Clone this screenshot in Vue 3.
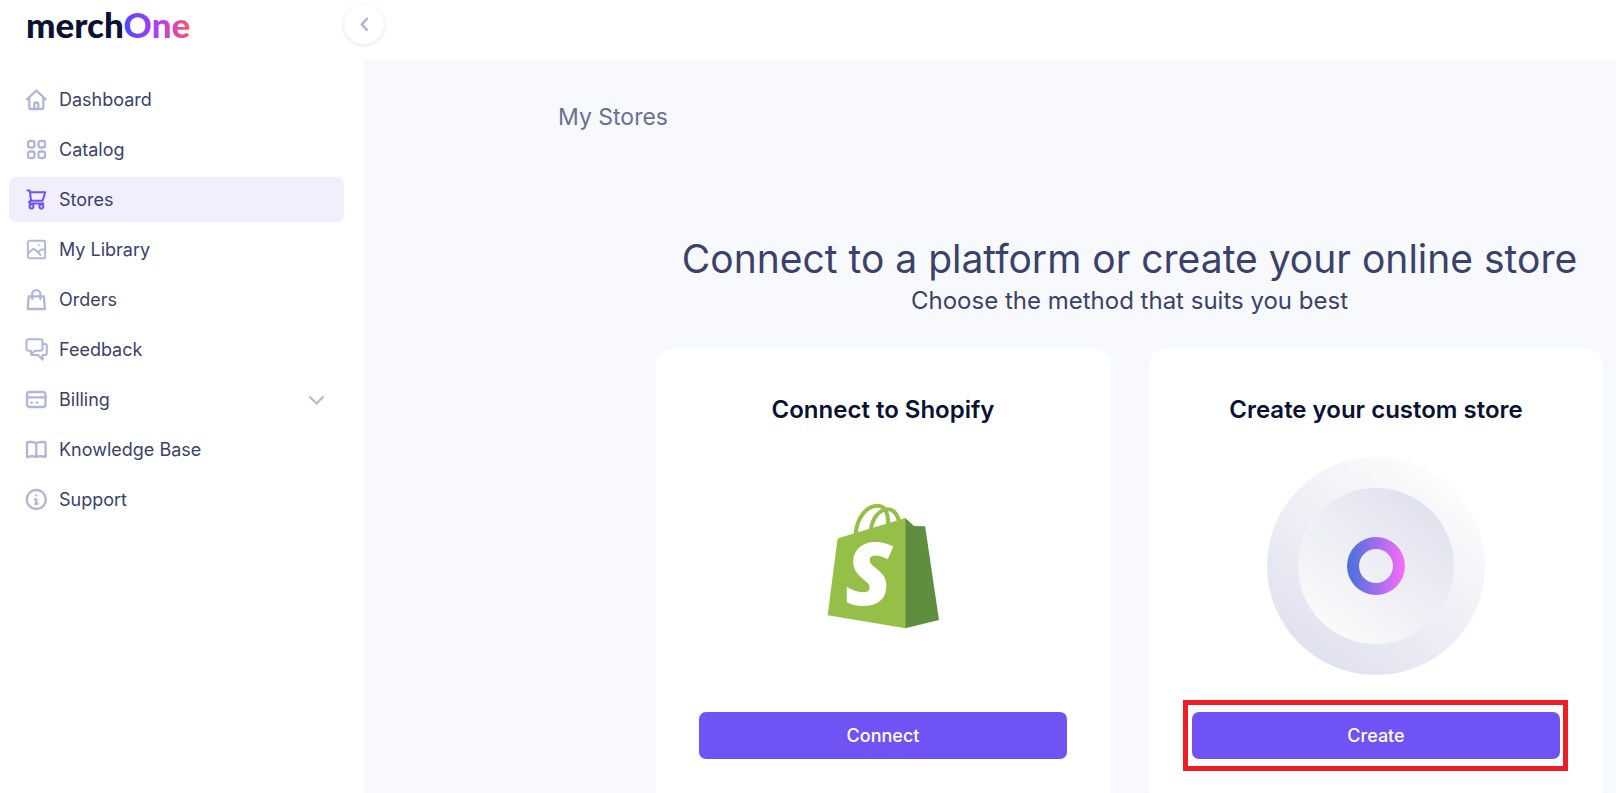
<template>
  <div class="layout">
    <aside class="sidebar">
      <a href="#" class="logo">merch<span class="logo-accent">One</span></a>
      <nav class="menu">
        <a
          v-for="item in menu"
          :key="item.label"
          href="#"
          class="menu-item"
          :class="{ active: item.label === current }"
          @click.prevent="current = item.label"
        >
          <svg class="icon" viewBox="0 0 24 24" :stroke-width="item.stroke || 2.3">
            <path v-for="d in item.paths" :key="d" :d="d" />
          </svg>
          <span class="menu-label">{{ item.label }}</span>
          <svg v-if="item.expandable" class="icon" viewBox="0 0 24 24" stroke-width="2">
            <path d="M6 9l6.5 6.5L19 9" />
          </svg>
        </a>
      </nav>
      <button type="button" class="collapse" aria-label="Collapse menu">
        <svg class="icon" viewBox="0 0 24 24" stroke-width="2.6">
          <path d="M14.8 6.8L9.8 12.3l5 5.5" />
        </svg>
      </button>
    </aside>

    <div class="page">
      <header class="topbar"></header>
      <main class="content">
        <h1 class="page-title">My Stores</h1>

        <section class="connect">
          <h2 class="connect-title">Connect to a platform or create your online store</h2>
          <p class="connect-text">Choose the method that suits you best</p>

          <div class="cards">
            <article class="card">
              <h3 class="card-title">Connect to Shopify</h3>
              <div class="card-visual">
                <svg class="shopify" viewBox="80 64 339 384">
                  <g fill="none" stroke="#95bf47" stroke-width="12">
                    <path d="M166 160C170 110 200 75 232 75c24 0 33 28 31 56" />
                    <path d="M212 146c4-32 24-60 50-60 20 0 28 14 34 34" />
                  </g>
                  <path fill="#95bf47" d="M118 171L308 114l8-2v331L82 404l29-225q1-6 7-8z" />
                  <path fill="#5e8e3e" d="M315 112l26 24 31 1q3 0 3 4l41 277-101 25z" />
                  <text class="shopify-letter" x="134" y="374">S</text>
                </svg>
              </div>
              <div class="card-action">
                <button type="button" class="btn">Connect</button>
              </div>
            </article>

            <article class="card">
              <h3 class="card-title">Create your custom store</h3>
              <div class="card-visual">
                <svg class="ring" viewBox="0 0 218 218">
                  <defs>
                    <linearGradient id="outer" x1="0.2" y1="0.9" x2="0.8" y2="0.1">
                      <stop offset="0" stop-color="#e1e2ef" />
                      <stop offset="1" stop-color="#fcfcfd" />
                    </linearGradient>
                    <linearGradient id="inner" x1="0.2" y1="0.9" x2="0.8" y2="0.1">
                      <stop offset="0" stop-color="#fafafb" />
                      <stop offset="1" stop-color="#e1e2ef" />
                    </linearGradient>
                    <linearGradient id="accent" x1="0" y1="0" x2="1" y2="0">
                      <stop offset="0" stop-color="#4570dc" />
                      <stop offset="1" stop-color="#f86dfa" />
                    </linearGradient>
                  </defs>
                  <circle cx="109" cy="109" r="109" fill="url(#outer)" />
                  <circle cx="109" cy="109" r="78" fill="url(#inner)" />
                  <path
                    fill="url(#accent)"
                    fill-rule="evenodd"
                    d="M80 109a29 29 0 1 0 58 0a29 29 0 1 0-58 0zM92 109a17 17 0 1 0 34 0a17 17 0 1 0-34 0z"
                  />
                </svg>
              </div>
              <div class="card-action highlighted">
                <button type="button" class="btn">Create</button>
              </div>
            </article>
          </div>
        </section>
      </main>
    </div>
  </div>
</template>

<script setup>
import { ref } from 'vue';

const current = ref('Stores');

const menu = [
  {
    label: 'Dashboard',
    paths: [
      'M3 11.3L12.3 2.5L21.7 11.3',
      'M5.3 10v9.5a1.5 1.5 0 0 0 1.5 1.5h11a1.5 1.5 0 0 0 1.5-1.5V10',
      'M10.3 20.5v-4a2 2 0 0 1 4 0v4',
    ],
  },
  {
    label: 'Catalog',
    paths: [
      'M6 3h2.5a2 2 0 0 1 2 2v2.5a2 2 0 0 1-2 2H6a2 2 0 0 1-2-2V5a2 2 0 0 1 2-2z',
      'M16.5 3H19a2 2 0 0 1 2 2v2.5a2 2 0 0 1-2 2h-2.5a2 2 0 0 1-2-2V5a2 2 0 0 1 2-2z',
      'M6 13.5h2.5a2 2 0 0 1 2 2V18a2 2 0 0 1-2 2H6a2 2 0 0 1-2-2v-2.5a2 2 0 0 1 2-2z',
      'M16.5 13.5H19a2 2 0 0 1 2 2V18a2 2 0 0 1-2 2h-2.5a2 2 0 0 1-2-2v-2.5a2 2 0 0 1 2-2z',
    ],
  },
  {
    label: 'Stores',
    stroke: 2,
    paths: [
      'M3.5 2.6h2.3l1.2 10.2',
      'M6.2 4.3h15l-2.6 8.5H7',
      'M7 12.8c-2 0-2.6 2.8-.5 2.8h12.8',
      'M5.5 18.6a2 2 0 1 0 4 0a2 2 0 1 0-4 0',
      'M15.3 18.6a2 2 0 1 0 4 0a2 2 0 1 0-4 0',
    ],
  },
  {
    label: 'My Library',
    stroke: 1.9,
    paths: [
      'M5.5 2.8h14a1.7 1.7 0 0 1 1.7 1.7v14a1.7 1.7 0 0 1-1.7 1.7h-14a1.7 1.7 0 0 1-1.7-1.7v-14a1.7 1.7 0 0 1 1.7-1.7z',
      'M4 15.5l4.3-4q1.3-1.2 2.6 0l5.6 5.5',
      'M14 14.5l2.8-2.7q2-1.5 4.2 1',
      'M14.7 7v.1',
    ],
  },
  {
    label: 'Orders',
    paths: [
      'M4.7 8.3h15.2l1 12.7H3.7z',
      'M8.2 11V6.3a4.1 4.1 0 0 1 8.2 0V11',
    ],
  },
  {
    label: 'Feedback',
    stroke: 2,
    paths: [
      'M4.5 1.3h12a2 2 0 0 1 2 2v7.5a2 2 0 0 1-2 2H10.7L7 16.5v-3.7H4.5a2 2 0 0 1-2-2V3.3a2 2 0 0 1 2-2z',
      'M18.5 6h2.3a2 2 0 0 1 2 2v7a2 2 0 0 1-2 2h-2.2v4.7L14 17H8',
    ],
  },
  {
    label: 'Billing',
    expandable: true,
    paths: [
      'M5.5 4h13.5a2.5 2.5 0 0 1 2.5 2.5v10a2.5 2.5 0 0 1-2.5 2.5h-13.5a2.5 2.5 0 0 1-2.5-2.5v-10a2.5 2.5 0 0 1 2.5-2.5z',
      'M3 9.3h18.5',
      'M7.3 14.6h.8',
      'M12.6 14.6h.8',
    ],
  },
  {
    label: 'Knowledge Base',
    paths: [
      'M12.3 5.5Q10.5 4 7.5 4H4.5Q3 4 3 5.5V19q6-1.5 9.3 0q3.3-1.5 9.3 0V5.5Q21.6 4 20 4h-3Q14 4 12.3 5.5z',
      'M12.3 5.5V19',
    ],
  },
  {
    label: 'Support',
    paths: [
      'M2.8 11.5a9.5 9.5 0 1 0 19 0a9.5 9.5 0 1 0-19 0',
      'M12.2 7.3v.1',
      'M11 11.3h1.3v4.5',
      'M11.3 15.9h2.2',
    ],
  },
];
</script>

<style>
body {
  margin: 0;
  background: #f8f9fd;
}
</style>

<style scoped>
.layout {
  display: flex;
  height: 100vh;
  overflow: hidden;
  font-family: Inter, "Liberation Sans", sans-serif;
  color: #3b4269;
}

h1,
h2,
h3,
p {
  margin: 0;
  font-weight: 400;
}

.sidebar {
  position: relative;
  flex: none;
  box-sizing: border-box;
  width: 364px;
  padding: 0 20px 0 9px;
  background: #fff;
}

.logo {
  display: block;
  height: 77px;
  padding-left: 17px;
  font-family: Lato, sans-serif;
  font-size: 35px;
  font-weight: 900;
  line-height: 48px;
  color: #0a1233;
  text-decoration: none;
  box-sizing: border-box;
}

.logo-accent {
  background: linear-gradient(90deg, #5148ff, #b13dfb 50%, #ff5463);
  background-clip: text;
  color: transparent;
}

.menu {
  display: flex;
  flex-direction: column;
  gap: 5px;
}

.menu-item {
  display: flex;
  align-items: center;
  gap: 11px;
  height: 45px;
  padding: 0 16px 0 15px;
  border-radius: 7px;
  font-size: 18px;
  color: inherit;
  text-decoration: none;
}

.menu-label {
  flex: 1;
}

.icon {
  flex: none;
  width: 24px;
  height: 24px;
  fill: none;
  stroke: #b2b5d6;
  stroke-linecap: round;
  stroke-linejoin: round;
}

.active {
  background: #f1eefd;
}

.active .icon {
  stroke: #6f53f5;
}

/* sits on the edge between the sidebar and the page */
.collapse {
  position: absolute;
  top: 4px;
  right: -20px;
  display: flex;
  align-items: center;
  justify-content: center;
  width: 40px;
  height: 40px;
  padding: 0;
  border: 0;
  border-radius: 50%;
  background: #fff;
  box-shadow: 0 1px 4px rgba(20, 20, 60, 0.12);
}

.page {
  flex: 1;
  min-width: 0;
}

.topbar {
  height: 59px;
  background: #fff;
}

.content {
  padding: 43px 13px 0 194px;
}

.page-title {
  font-size: 23px;
  line-height: 30px;
  color: #68728f;
}

.connect {
  margin: 102px 0 0 98px;
  text-align: center;
}

.connect-title {
  font-size: 39px;
  line-height: 50px;
  white-space: nowrap;
}

.connect-text {
  font-size: 24px;
  line-height: 34px;
}

.cards {
  display: grid;
  grid-template-columns: 1fr 1fr;
  gap: 39px;
  margin-top: 31px;
}

.card {
  padding: 46px 43px 47px;
  border-radius: 16px;
  background: #fff;
}

.card-title {
  font-size: 24px;
  font-weight: 600;
  line-height: 30px;
  color: #0a1233;
}

.card-visual {
  display: flex;
  align-items: center;
  justify-content: center;
  height: 218px;
  margin: 32px 0 37px;
}

.shopify {
  width: 113px;
  height: 128px;
}

.shopify-letter {
  font-family: "Open Sans", sans-serif;
  font-size: 260px;
  font-style: italic;
  font-weight: 800;
  fill: #fff;
}

.ring {
  width: 218px;
  height: 218px;
}

.card-action {
  position: relative;
}

.highlighted::after {
  content: "";
  position: absolute;
  inset: -12px -8px -12px -9px;
  border: 5px solid #ee1c25;
  pointer-events: none;
}

.btn {
  display: block;
  width: 100%;
  height: 47px;
  border: 0;
  border-radius: 7px;
  background: #6f53f5;
  font-family: inherit;
  font-size: 18px;
  font-weight: 500;
  color: #fff;
}
</style>
